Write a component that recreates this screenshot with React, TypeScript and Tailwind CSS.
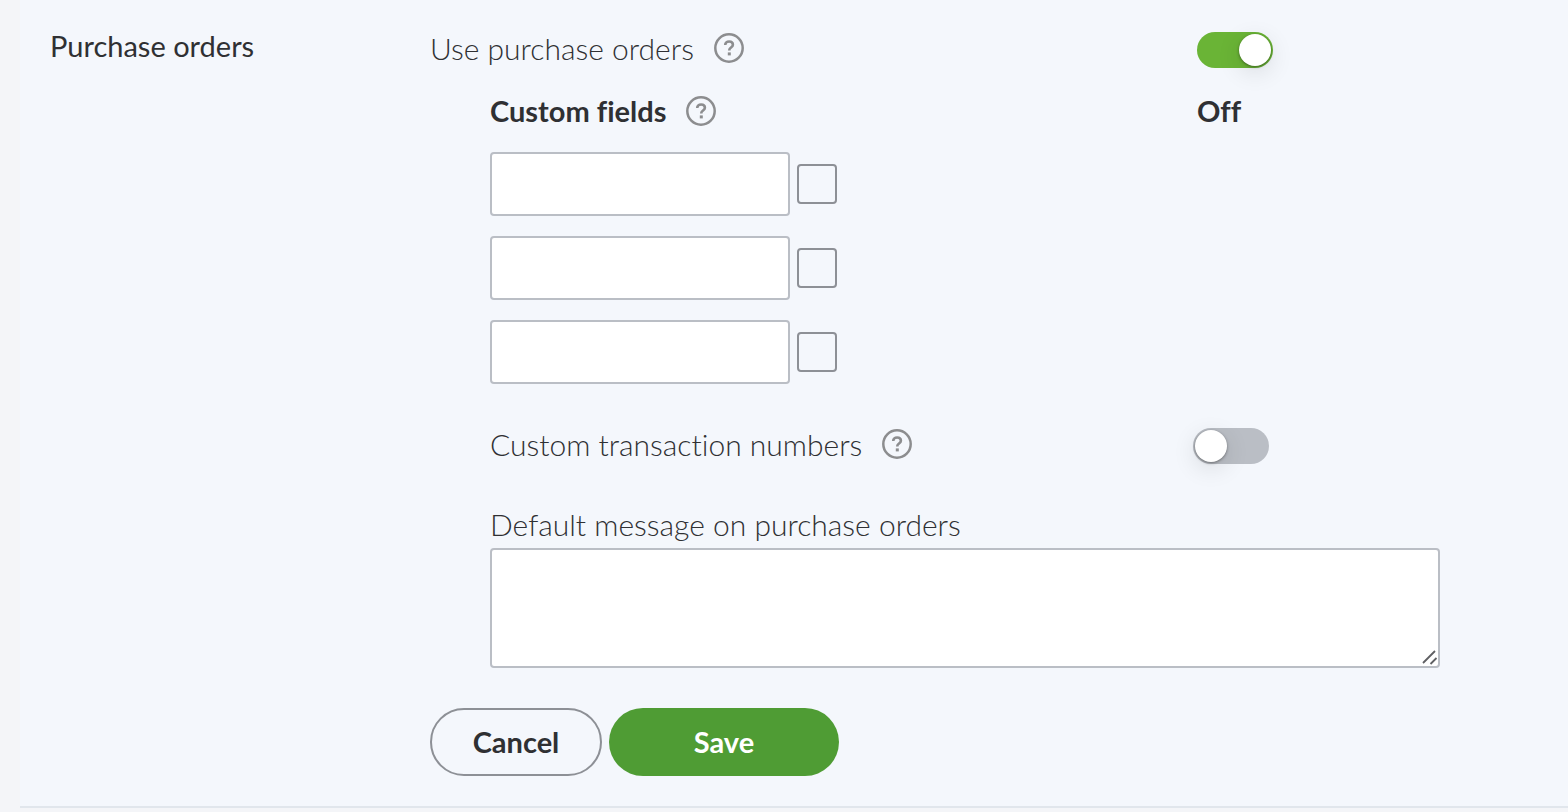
import React, { useState } from 'react';

function HelpButton({ label }: { label: string }) {
  return (
    <button type="button" aria-label={label} className="ml-5 shrink-0 text-[#8c8d8f]">
      <svg viewBox="0 0 30 30" className="block h-[30px] w-[30px]" fill="none" stroke="currentColor">
        <circle cx="15" cy="15" r="13.7" strokeWidth="2.5" />
        <path d="M11.2 12c0-2.2 1.6-3.5 3.9-3.5s3.8 1.3 3.8 3.2c0 2.6-3.6 2.8-3.6 5.2v.6" strokeWidth="2.6" />
        <rect x="13.8" y="19.4" width="3" height="3" fill="currentColor" stroke="none" />
      </svg>
    </button>
  );
}

interface SwitchProps {
  id: string;
  checked: boolean;
  onChange: (checked: boolean) => void;
}

function Switch({ id, checked, onChange }: SwitchProps) {
  return (
    <input
      id={id}
      type="checkbox"
      role="switch"
      checked={checked}
      onChange={(e) => onChange(e.target.checked)}
      className="flex h-9 w-[76px] shrink-0 cursor-pointer appearance-none items-center rounded-full bg-[#babec5] px-0.5 before:h-8 before:w-8 before:rounded-full before:bg-white before:shadow-[0_1px_3px_rgba(0,0,0,0.4),0_6px_24px_rgba(0,0,0,0.12)] before:content-[''] checked:justify-end checked:bg-[#6ab436]"
    />
  );
}

const customFields = ['Custom field 1', 'Custom field 2', 'Custom field 3'];

export default function App() {
  const [usePurchaseOrders, setUsePurchaseOrders] = useState(true);
  const [customNumbers, setCustomNumbers] = useState(false);

  return (
    <div className="min-h-screen bg-[#f4f5f8] pl-5 font-['Lato','Open_Sans',sans-serif] text-[29px] leading-9 text-[#2f3033] [font-variant-ligatures:none]">
      <form
        className="flex border-b-2 border-[#e1e6ec] bg-[#f4f7fc] pt-8 pr-32 pb-[30px] pl-[30px]"
        onSubmit={(e) => e.preventDefault()}
      >
        <h2 className="w-[380px] shrink-0 leading-7">Purchase orders</h2>

        <div className="min-w-0 flex-1">
          <div className="flex h-9 items-start">
            <div className="flex h-8 items-center">
              <label htmlFor="use-po" className="text-[30px] leading-7 font-light">
                Use purchase orders
              </label>
              <HelpButton label="Help with purchase orders" />
            </div>
            <div className="ml-auto w-[243px]">
              <Switch id="use-po" checked={usePurchaseOrders} onChange={setUsePurchaseOrders} />
            </div>
          </div>

          <div className="pl-[60px]">
            <div className="mt-6 flex h-[38px] items-center font-bold">
              <h3>Custom fields</h3>
              <HelpButton label="Help with custom fields" />
              <span className="ml-auto w-[243px]">Off</span>
            </div>

            <div className="mt-[22px] flex flex-col gap-5">
              {customFields.map((name) => (
                <div key={name} className="flex items-center gap-[7px]">
                  <input
                    type="text"
                    aria-label={name}
                    className="h-16 w-[300px] rounded border-2 border-[#babec5] bg-white px-4"
                  />
                  <input
                    type="checkbox"
                    aria-label={`Use ${name}`}
                    className="h-10 w-10 appearance-none rounded border-2 border-[#8d9096] checked:bg-[#6ab436]"
                  />
                </div>
              ))}
            </div>

            <div className="mt-11 flex h-9 items-start">
              <div className="flex h-8 items-center">
                <label htmlFor="custom-numbers" className="text-[30px] leading-7 font-light">
                  Custom transaction numbers
                </label>
                <HelpButton label="Help with custom transaction numbers" />
              </div>
              <div className="ml-auto w-[247px]">
                <Switch id="custom-numbers" checked={customNumbers} onChange={setCustomNumbers} />
              </div>
            </div>

            <label
              htmlFor="default-message"
              className="mt-10 block pb-1 text-[30px] leading-10 font-light"
            >
              Default message on purchase orders
            </label>
            <div className="relative">
              <textarea
                id="default-message"
                className="block h-[120px] w-full resize-none rounded border-2 border-[#babec5] bg-white px-4 py-2"
              />
              <svg
                viewBox="0 0 16 16"
                className="pointer-events-none absolute right-0.5 bottom-0.5 h-4 w-4"
                fill="none"
                stroke="#5f6063"
                strokeWidth="1.8"
              >
                <path d="M1 13 13 1M8.500 14 14.500 8" />
              </svg>
            </div>
          </div>

          <div className="mt-10 flex gap-[7px] font-bold">
            <button type="button" className="h-[68px] w-[172px] rounded-full border-2 border-[#8d9096]">
              Cancel
            </button>
            <button type="submit" className="h-[68px] w-[230px] rounded-full bg-[#4f9c34] text-white">
              Save
            </button>
          </div>
        </div>
      </form>
    </div>
  );
}
